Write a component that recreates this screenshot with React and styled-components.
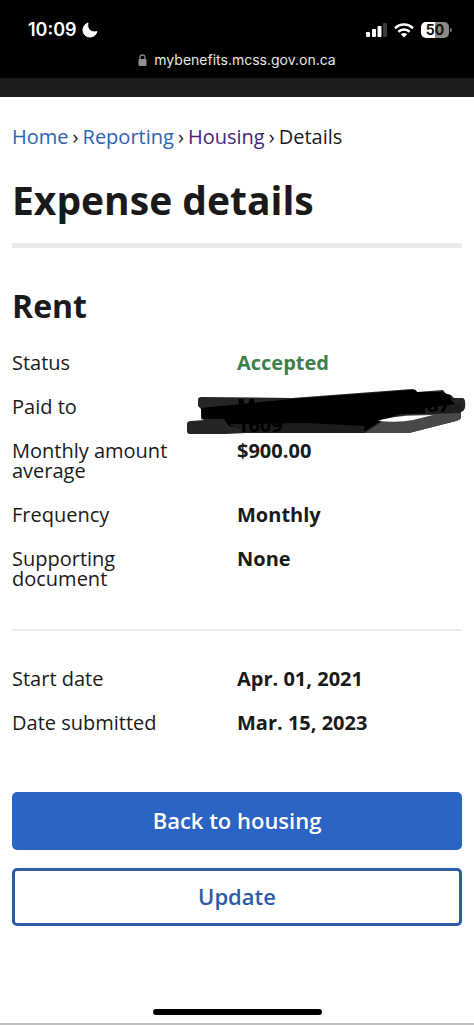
import React from "react";
import styled, { createGlobalStyle } from "styled-components";

const GlobalStyle = createGlobalStyle`
  *, *::before, *::after { box-sizing: border-box; }
  body {
    margin: 0;
    background: #fff;
    color: #1a1a1a;
    font-family: "Open Sans", "Noto Sans", sans-serif;
    font-size: 20px;
    line-height: 20px;
  }
`;

const Screen = styled.div`
  display: flex;
  flex-direction: column;
  min-height: 100vh;
  border-bottom: 2px solid #bfc1be;
`;

const BrowserTop = styled.header`
  background: #000;
  color: #fff;
  font-family: Inter, "Liberation Sans", sans-serif;
  border-bottom: 19px solid #1c1c1c;
`;

const StatusBar = styled.div`
  display: flex;
  justify-content: space-between;
  align-items: center;
  height: 48px;
  padding: 12px 23px 0 28px;
`;

const Clock = styled.div`
  display: flex;
  align-items: center;
  gap: 5px;
  font-size: 18px;
  font-weight: 600;
`;

const Indicators = styled.div`
  display: flex;
  align-items: center;
  gap: 7px;
`;

const Battery = styled.div`
  position: relative;
  width: 28px;
  height: 16px;
  margin-right: 2px;
  border-radius: 5px;
  background: linear-gradient(90deg, #fff 50%, #8a8a8a 50%);
  color: #111;
  font-size: 14px;
  font-weight: 700;
  line-height: 16px;
  text-align: center;

  &::after {
    content: "";
    position: absolute;
    top: 6px;
    right: -3px;
    width: 2px;
    height: 4px;
    border-radius: 0 2px 2px 0;
    background: #777;
  }
`;

const AddressBar = styled.div`
  display: flex;
  justify-content: center;
  align-items: center;
  gap: 7px;
  height: 30px;
  padding-bottom: 6px;
  color: #e6e6e6;
  font-size: 14px;
`;

const Page = styled.main`
  flex: 1;
  padding: 30px 12px 0;
`;

const Breadcrumbs = styled.nav`
  display: flex;
  flex-wrap: wrap;
  gap: 4px;
`;

const Crumb = styled.a`
  color: ${(p) => (p.$visited ? "#4b2379" : "#2e62b5")};
  text-decoration: none;
`;

const Title = styled.h1`
  margin: 29px 0 20px;
  font-size: 39px;
  font-weight: 700;
  line-height: 47px;
`;

const Subtitle = styled.h2`
  margin: 0 0 27px;
  font-size: 32px;
  font-weight: 700;
  line-height: 40px;
`;

const Rule = styled.hr`
  height: ${(p) => (p.$thick ? 5 : 2)}px;
  margin: 0;
  border: 0;
  background: #ebebeb;
`;

const Section = styled.section`
  padding: 38px 0 ${(p) => (p.$last ? 0 : 40)}px;
`;

const Details = styled.dl`
  display: grid;
  gap: 24px;
  margin: 0;
`;

const DetailRow = styled.div`
  display: grid;
  grid-template-columns: 1fr 1fr;
`;

const Label = styled.dt`
  padding-right: 48px;
`;

const Value = styled.dd`
  position: relative;
  margin: 0;
  color: ${(p) => (p.$positive ? "#3c7f49" : "#1a1a1a")};
  font-weight: 700;
`;

const Scribble = styled.svg`
  position: absolute;
  top: -9px;
  left: -50px;
  width: 280px;
  height: 47px;
  overflow: visible;
`;

const Actions = styled.div`
  display: grid;
  gap: 18px;
  padding: 59px 0 32px;
`;

const Button = styled.button`
  height: 58px;
  padding: 0 16px 2px;
  border: 3px solid ${(p) => (p.$primary ? "#2a64c5" : "#2c5ba9")};
  border-radius: 5px;
  background: ${(p) => (p.$primary ? "#2a64c5" : "#fff")};
  color: ${(p) => (p.$primary ? "#fff" : "#2c5ba9")};
  font: 600 22px/28px "Open Sans", sans-serif;
`;

const HomeIndicator = styled.div`
  width: 169px;
  height: 6px;
  margin: 0 auto 8px;
  border-radius: 3px;
  background: #000;
`;

const Moon = () => (
  <svg width="16" height="16" viewBox="0 0 16 16" aria-hidden="true">
    <path d="M6 1C4.500 6 8 11 15 9.700C13.900 13 11.200 15 8 15C4 15 1 12 1 8C1 4.800 3 2 6 1Z" fill="#fff" stroke="#fff" strokeLinejoin="round" />
  </svg>
);

const Signal = () => (
  <svg width="21" height="14" viewBox="0 0 21 14" aria-hidden="true">
    <rect x="0" y="9" width="4" height="5" rx="1" fill="#fff" />
    <rect x="6" y="6" width="4" height="8" rx="1" fill="#fff" />
    <rect x="11.500" y="3" width="4" height="11" rx="1" fill="#fff" />
    <rect x="17" y="0" width="4" height="14" rx="1" fill="#3a3a3a" />
  </svg>
);

const Wifi = () => (
  <svg width="20" height="15" viewBox="0 0 20 15" aria-hidden="true">
    <g fill="none" stroke="#fff" strokeWidth="2.600">
      <path d="M1 5.300C6 .3 14 .3 19 5.300" />
      <path d="M4.300 8.800C7.500 5.700 12.500 5.700 15.700 8.800" />
    </g>
    <path d="M6.800 11.200C8.600 9.500 11.400 9.500 13.200 11.200L10 14.600Z" fill="#fff" />
  </svg>
);

const Lock = () => (
  <svg width="9" height="12" viewBox="0 0 9 12" aria-hidden="true">
    <rect x="0.500" y="5" width="8" height="7" rx="1.200" fill="#929292" />
    <path d="M2 5.500V3.200C2 0 7 0 7 3.200V5.500" fill="none" stroke="#929292" strokeWidth="1.200" />
  </svg>
);

const Redaction = () => (
  <Scribble viewBox="0 0 280 47">
    <path d="M11 12Q11 9 14 9L105 10L225 1Q229 1 230 4L256 2L259 6L264 7L267 10L276 10Q279 11 278 20Q277 23 274 24L274 30Q273 32 269 33L222 45H60L38 46H3Q0 46 0 43V36Q0 33 4 33L17 32L14 31V21L11 18Z" fill="#252525" />
    <path d="M14 20Q65 15 105 11L225 2Q229 2 230 4L255 4L263 7L264 12L270 18L262 25L214 26L198 31L178 43Q110 41 55 40L42 38L37 31L17 31Q14 30 14 20Z" fill="#000" />
    <path d="M178 45L197 32L218 27L274 25V30Q273 32 269 33L222 45Z" fill="#484848" />
    <path d="M191 33Q207 27 246 27L226 32Q212 35 191 33Z" fill="#fff" />
    <path d="M238 20L276 15L274 24L238 26Z" fill="#1d1d1d" />
    <path d="M42 36L120 35L178 38L176 45H60Z" fill="#1c1c1c" />
    <text x="50" y="25" fill="#000" fontSize="20" fontWeight="700">M</text>
    <text x="50" y="44" fill="#000" fontSize="20" fontWeight="700">1609</text>
    <text x="240" y="24" fill="#000" fontSize="20" fontWeight="700">87</text>
  </Scribble>
);

const Detail = ({ label, positive, children }) => (
  <DetailRow>
    <Label>{label}</Label>
    <Value $positive={positive}>{children}</Value>
  </DetailRow>
);

export default function App() {
  return (
    <>
      <GlobalStyle />
      <Screen>
        <BrowserTop>
          <StatusBar>
            <Clock>10:09 <Moon /></Clock>
            <Indicators>
              <Signal />
              <Wifi />
              <Battery>50</Battery>
            </Indicators>
          </StatusBar>
          <AddressBar><Lock />mybenefits.mcss.gov.on.ca</AddressBar>
        </BrowserTop>
        <Page>
          <Breadcrumbs aria-label="Breadcrumb">
            <Crumb href="#home">Home</Crumb>
            <span>›</span>
            <Crumb href="#reporting">Reporting</Crumb>
            <span>›</span>
            <Crumb href="#housing" $visited>Housing</Crumb>
            <span>›</span>
            <span aria-current="page">Details</span>
          </Breadcrumbs>
          <Title>Expense details</Title>
          <Rule $thick />
          <Section>
            <Subtitle>Rent</Subtitle>
            <Details>
              <Detail label="Status" positive>Accepted</Detail>
              <Detail label="Paid to"><Redaction /></Detail>
              <Detail label="Monthly amount average">$900.00</Detail>
              <Detail label="Frequency">Monthly</Detail>
              <Detail label="Supporting document">None</Detail>
            </Details>
          </Section>
          <Rule />
          <Section $last>
            <Details>
              <Detail label="Start date">Apr. 01, 2021</Detail>
              <Detail label="Date submitted">Mar. 15, 2023</Detail>
            </Details>
          </Section>
          <Actions>
            <Button type="button" $primary>Back to housing</Button>
            <Button type="button">Update</Button>
          </Actions>
        </Page>
        <HomeIndicator />
      </Screen>
    </>
  );
}
